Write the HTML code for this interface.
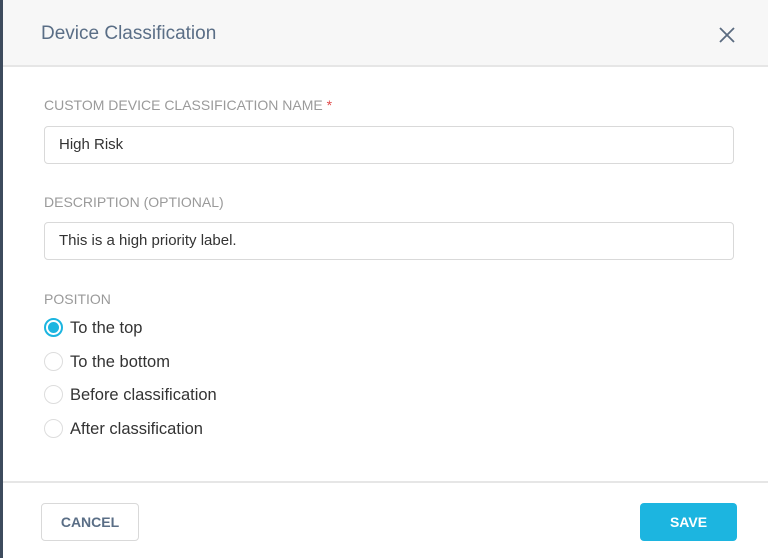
<!DOCTYPE html>
<html><head><style>
*{box-sizing:border-box;margin:0;padding:0}
body{width:768px;height:558px;overflow:hidden;background:#fff;font-family:"Liberation Sans",sans-serif;position:relative}
.strip{position:absolute;left:0;top:0;width:3px;height:558px;background:#3d4b5d}
.hdr{position:absolute;left:3px;top:0;right:0;height:67px;background:#f7f7f7;border-bottom:2px solid #e6e6e6}
.title{position:absolute;left:41px;top:23px;font-size:19px;color:#5a6e86}
.x{position:absolute;left:718px;top:26px}
.lbl{position:absolute;left:44px;font-size:14px;color:#9a9a9a}
.lbl b{color:#e04b4b;font-weight:normal}
.inp{position:absolute;left:44px;width:690px;height:38px;border:1px solid #d9d9d9;border-radius:4px;font-size:15px;color:#333;padding:9px 14px}
.r{position:absolute;left:44px;height:20px;font-size:16.5px;color:#333;line-height:20px}
.r i{position:absolute;left:0;top:0;width:19px;height:19px;border:1px solid #ddd;border-radius:50%}
.r span{position:absolute;left:26px;white-space:nowrap}
.r i.on{border:2px solid #1cb5e0}
.r i.on:after{content:"";position:absolute;left:2px;top:2px;width:11px;height:11px;border-radius:50%;background:#1cb5e0}
.fline{position:absolute;left:3px;right:0;top:481px;height:2px;background:#e6e6e6}
.btn{position:absolute;top:503px;height:38px;border-radius:4px;font-size:14px;font-weight:bold;text-align:center;line-height:38px}
</style></head><body>
<div class="strip"></div>
<div class="hdr"></div>
<div class="title">Device Classification</div>
<svg class="x" width="18" height="18" viewBox="0 0 18 18"><path d="M2 2L16 16M16 2L2 16" stroke="#5a6b80" stroke-width="1.8"/></svg>
<div class="lbl" style="top:97px">CUSTOM DEVICE CLASSIFICATION NAME <b>*</b></div>
<div class="inp" style="top:126px">High Risk</div>
<div class="lbl" style="top:194px">DESCRIPTION (OPTIONAL)</div>
<div class="inp" style="top:222px">This is a high priority label.</div>
<div class="lbl" style="top:291px">POSITION</div>
<div class="r" style="top:318px"><i class="on"></i><span>To the top</span></div>
<div class="r" style="top:352px"><i></i><span>To the bottom</span></div>
<div class="r" style="top:385px"><i></i><span>Before classification</span></div>
<div class="r" style="top:419px"><i></i><span>After classification</span></div>
<div class="fline"></div>
<div class="btn" style="left:41px;width:98px;border:1px solid #d9d9d9;color:#5a6e86;line-height:36px">CANCEL</div>
<div class="btn" style="left:640px;width:97px;background:#1cb5e0;color:#fff">SAVE</div>
</body></html>
